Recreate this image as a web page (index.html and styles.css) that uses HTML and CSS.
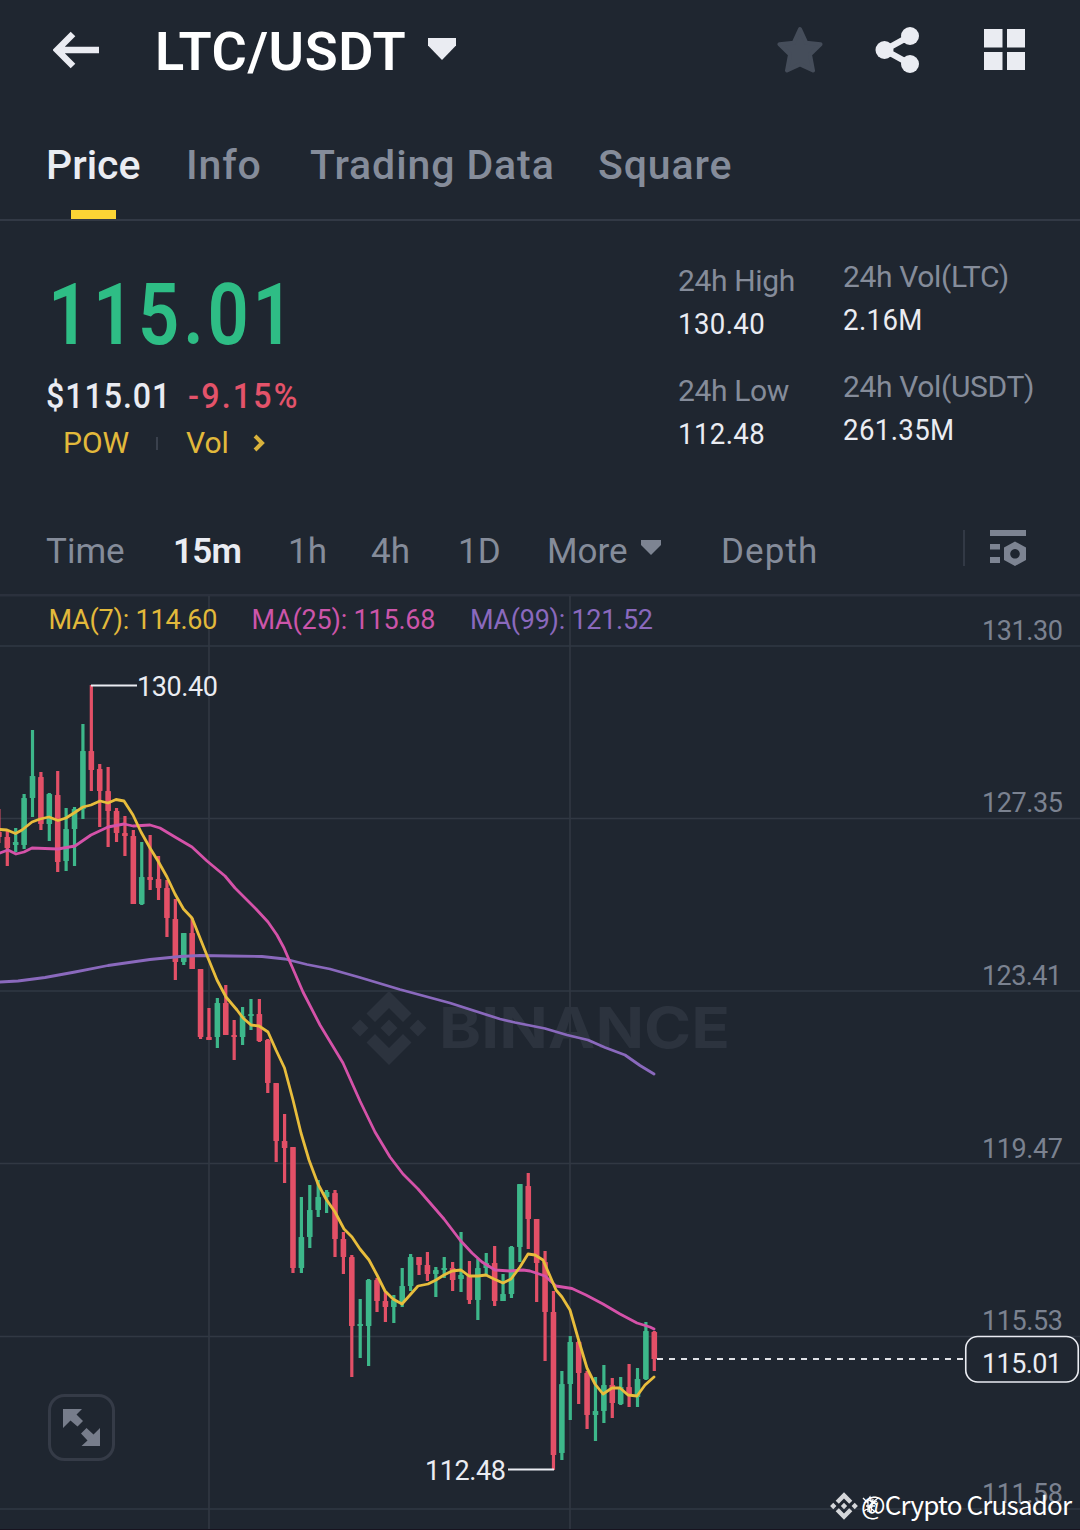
FILE: index.html
```html
<!DOCTYPE html>
<html lang="en">
<head>
    <meta charset="UTF-8">
    <meta name="viewport" content="width=device-width, initial-scale=1.0">
    <title>LTC/USDT</title>
    <link rel="stylesheet" href="styles.css">
</head>
<body>
    <header class="top-bar">
        <svg class="back-icon" viewBox="0 0 46 38" width="46" height="38">
            <path d="M20 3 L4 19 L20 35 M4 19 H46" fill="none" stroke="#eaecf2" stroke-width="6.5"/>
        </svg>
        <h1>LTC/USDT</h1>
        <svg class="pair-caret" viewBox="0 0 28 22" width="28" height="22">
            <path d="M0 0 H28 V7.500 L14 22 L0 7.500 Z" fill="#eaecf2"/>
        </svg>
        <div class="top-actions">
            <svg viewBox="0 0 46 48" width="46" height="48">
                <path d="M23 3 L29.300 16.800 L43.500 18.200 L33 28.500 L36 44.500 L23 38.500 L10 44.500 L13 28.500 L2.500 18.200 L16.700 16.800 Z" fill="#454d5a" stroke="#454d5a" stroke-width="4" stroke-linejoin="round"/>
            </svg>
            <svg viewBox="0 0 44 48" width="44" height="48">
                <path d="M35 10 L9.500 24 L35 38" fill="none" stroke="#eaecf2" stroke-width="6"/>
                <circle cx="35" cy="10" r="9" fill="#eaecf2"/>
                <circle cx="9.500" cy="24" r="9" fill="#eaecf2"/>
                <circle cx="35" cy="38" r="9" fill="#eaecf2"/>
            </svg>
            <svg viewBox="0 0 41 41" width="41" height="41">
                <path d="M0 0h18.500v18.500H0z M23 0H41v18.500H23z M0 23h18.500V41H0z M23 23H41V41H23z" fill="#eaecf2"/>
            </svg>
        </div>
    </header>

    <nav class="tabs">
        <a class="tab active">Price</a>
        <a class="tab">Info</a>
        <a class="tab">Trading Data</a>
        <a class="tab">Square</a>
    </nav>

    <section class="summary">
        <div class="quote">
            <div class="last-price">115.01</div>
            <div class="fiat-row">
                <span class="fiat">$115.01</span>
                <span class="change">-9.15%</span>
            </div>
            <div class="tags">
                <span class="tag-pow">POW</span>
                <i class="tag-divider"></i>
                <span class="tag-vol">Vol</span>
                <svg viewBox="0 0 12 18" width="12" height="18">
                    <path d="M2 2 L9 9 L2 16" fill="none" stroke="#d9b23c" stroke-width="4"/>
                </svg>
            </div>
        </div>
        <div class="stats">
            <div class="label">24h High</div>
            <div class="value">130.40</div>
            <div class="label second">24h Low</div>
            <div class="value">112.48</div>
        </div>
        <div class="stats volume">
            <div class="label">24h Vol(LTC)</div>
            <div class="value">2.16M</div>
            <div class="label second">24h Vol(USDT)</div>
            <div class="value">261.35M</div>
        </div>
    </section>

    <nav class="intervals">
        <span>Time</span>
        <span class="active">15m</span>
        <span>1h</span>
        <span>4h</span>
        <span>1D</span>
        <span class="more">More
            <svg viewBox="0 0 20 15" width="20" height="15">
                <path d="M0 0 H20 V5 L10 15 L0 5 Z" fill="#7d8492"/>
            </svg>
        </span>
        <span class="depth">Depth</span>
        <i class="interval-divider"></i>
        <svg class="indicator-icon" viewBox="0 0 36 38" width="36" height="38">
            <path d="M0 1h36v6H0z M0 15h10v5.500H0z M0 28h10v6H0z" fill="#7d8492"/>
            <path fill-rule="evenodd" d="M25 12.500 L36 18.500 V31 L25 37 L14 31 V18.500 Z M25 20 a4.800 4.800 0 1 0 0.010 0 Z" fill="#7d8492"/>
        </svg>
    </nav>

    <svg class="chart" viewBox="0 594 1080 936" width="1080" height="936">
        <g class="grid">
            <path class="chart-top" d="M0 595H1080"/>
            <path d="M0 646H1080 M0 818.500H1080 M0 991H1080 M0 1163.500H1080 M0 1336.500H1080 M0 1509H1080"/>
            <path d="M209 596V1530 M570 596V1530"/>
        </g>

        <g class="brand">
            <g id="brand-mark" transform="translate(389 1028)">
                <path d="M0 -37 L22.500 -14.500 L14 -6 L0 -20 L-14 -6 L-22.500 -14.500 Z"/>
                <path d="M0 37 L22.500 14.500 L14 6 L0 20 L-14 6 L-22.500 14.500 Z"/>
                <path d="M0 -8.500 L8.500 0 L0 8.500 L-8.500 0 Z M-29 -8.500 L-20.500 0 L-29 8.500 L-37.500 0 Z M29 -8.500 L37.500 0 L29 8.500 L20.500 0 Z"/>
            </g>
            <text x="439" y="1048" textLength="291" lengthAdjust="spacingAndGlyphs">BINANCE</text>
        </g>

        <g id="candles"></g>

        <polyline class="ma ma99" points="0,982 18,981 45,977.500 75,972 108,965.500 150,959.500 180,956.500 200,955.500 230,956 262,956.500 285,959 307,964.500 330,969 360,977.500 400,989.500 450,1003 500,1019 515,1022.500 545,1028.500 567,1035 588,1040 605,1047.500 625,1055 640,1065.500 654,1074"/>
        <polyline class="ma ma25" points="0,853 8,850 16,854 24,852 32,848 58,849 75,846 91,835 108,827 124,824 133,826 150,825 160,828 175,837 192,847 207,861 225,876 235,888 245,898 256,909 268,922 277,935 284,948 290,962 303,992 320,1025 343,1063 360,1101 375,1132 390,1157 403,1174 418,1189 431,1204 444,1219 460,1240 472,1253 482,1262 495,1270 510,1271 523,1270 530,1271 545,1276 556,1286 572,1288.500 586,1295 603,1304 620,1314 637,1323 650,1327 654,1329"/>
        <polyline class="ma ma7" points="0,829.500 7,830 15.500,833.500 22,830 32,822 40,819 49,817 58,820.500 66,818 74,813 83,807 91,805 100,801 108,803 116,799.500 124,801 133,815 141,832 150,848 158,861 167,877 175,894 183.500,909 192,918 200,938 208,958 217,980 226,997 237,1010 243,1018 251,1025 259,1026 268,1032 276,1050 284.500,1068 293,1100 301,1133 309,1160 318,1184 326,1199 335,1212 344,1229 352,1237 360,1249 369,1260 377,1275 385,1291 393,1299 402,1304 410,1295 418,1286 428,1284 436,1280 444,1275 452,1271 461,1270 469,1276 478,1276 486,1275 494,1279 503,1283 511,1279 520,1267 528,1254 535,1255 543,1260 550,1276 556,1290 562,1297 570,1310 578,1338 587,1368 595,1384 603,1394 612,1388 620,1388 628,1395 637,1396 645,1385 654,1377"/>

        <g class="legend">
            <text class="ma7-text" x="48.500" y="629" textLength="169">MA(7): 114.60</text>
            <text class="ma25-text" x="251.500" y="629" textLength="184">MA(25): 115.68</text>
            <text class="ma99-text" x="470" y="629" textLength="183">MA(99): 121.52</text>
        </g>

        <g class="axis">
            <text x="982" y="640" textLength="81">131.30</text>
            <text x="982" y="812" textLength="81">127.35</text>
            <text x="982" y="985" textLength="80">123.41</text>
            <text x="982" y="1158" textLength="81">119.47</text>
            <text x="982" y="1330" textLength="81">115.53</text>
            <text x="982" y="1503" textLength="81">111.58</text>
        </g>

        <g class="extremes">
            <path d="M91 685.500H137 M508 1469.500H554"/>
            <text x="137" y="696" textLength="81">130.40</text>
            <text x="425" y="1480" textLength="81">112.48</text>
        </g>

        <path class="last-line" d="M657 1359H965"/>
        <rect class="last-box" x="965.750" y="1336.500" width="112.500" height="45.500" rx="12"/>
        <text class="last-text" x="982" y="1373" textLength="80">115.01</text>

        <g class="expand">
            <rect x="49.500" y="1395.500" width="64" height="64" rx="15"/>
            <path d="M63 1409 H82 L76.500 1414.500 L83 1421 L77.500 1426.500 L70.500 1420.500 L63 1428 Z"/>
            <path d="M100 1446 H81.500 L87.500 1440.500 L81 1433.500 L86.500 1428 L93.500 1434.500 L100 1428 Z"/>
        </g>

        <g class="author">
            <use href="#brand-mark" transform="translate(844 1506) scale(.37) translate(-389 -1028)"/>
            <path class="scribble" d="M863 1498l4 4 3-5 2 6 6-5 M864 1503l5-3 4 3 4-2 M866 1506h9 M868 1500v12 M873 1499l-2 13 M864 1511l6-4 5 5"/>
            <text x="861" y="1515" textLength="211">@Crypto Crusador</text>
        </g>
        <path d="M0 1529.500H1080" stroke="#17131f"/>
    </svg>

    <script>
        // [direction, high, body top, body bottom, low]
        const candles = [
            ['r', 809, 832, 837, 843], ['r', 830, 837, 848, 866], ['g', 828, 842, 845, 852],
            ['g', 794, 798, 845, 849], ['g', 730, 776, 798, 817], ['r', 772, 777, 824, 830],
            ['g', 793, 794, 824, 841], ['r', 771, 795, 862, 872], ['g', 808, 829, 861, 871],
            ['g', 807, 809, 829, 866], ['g', 724, 751, 809, 819], ['r', 685, 751, 770, 791],
            ['r', 764, 769, 791, 827], ['r', 767, 791, 811, 847], ['r', 808, 811, 833, 842],
            ['r', 816, 833, 836, 856], ['r', 830, 836, 904, 904], ['g', 842, 877, 904, 905],
            ['r', 835, 877, 880, 890], ['r', 856, 879, 888, 900], ['r', 880, 888, 918, 937],
            ['r', 899, 919, 962, 980], ['g', 933, 933, 962, 965], ['r', 918, 933, 969, 969],
            ['r', 969, 969, 1037, 1039], ['r', 1008, 1037, 1040, 1040], ['g', 998, 1003, 1037, 1048],
            ['r', 985, 1003, 1035, 1035], ['r', 1020, 1035, 1037, 1060], ['g', 1007, 1016, 1037, 1045],
            ['g', 999, 1014, 1016, 1030], ['r', 999, 1014, 1041, 1042], ['r', 1039, 1040, 1083, 1093],
            ['r', 1083, 1083, 1141, 1162], ['r', 1114, 1141, 1148, 1183], ['r', 1147, 1147, 1268, 1273],
            ['g', 1197, 1237, 1268, 1273], ['g', 1185, 1210, 1237, 1248], ['g', 1180, 1197, 1210, 1217],
            ['g', 1190, 1192, 1197, 1213], ['r', 1190, 1193, 1239, 1257], ['r', 1232, 1239, 1257, 1274],
            ['r', 1255, 1257, 1326, 1377], ['g', 1299, 1324, 1326, 1358], ['g', 1279, 1280, 1326, 1366],
            ['r', 1278, 1280, 1301, 1312], ['r', 1291, 1301, 1307, 1322], ['g', 1295, 1300, 1307, 1323],
            ['g', 1268, 1286, 1303, 1307], ['g', 1254, 1257, 1286, 1291], ['r', 1257, 1257, 1265, 1275],
            ['r', 1252, 1265, 1274, 1281], ['g', 1267, 1270, 1274, 1297], ['g', 1257, 1268, 1270, 1278],
            ['r', 1262, 1268, 1280, 1291], ['g', 1232, 1275, 1279, 1292], ['r', 1261, 1275, 1300, 1304],
            ['g', 1259, 1268, 1300, 1320], ['g', 1253, 1263, 1268, 1275], ['r', 1246, 1263, 1301, 1306],
            ['g', 1274, 1294, 1301, 1301], ['g', 1246, 1247, 1294, 1298], ['g', 1184, 1184, 1247, 1262],
            ['r', 1173, 1186, 1219, 1249], ['r', 1219, 1219, 1263, 1302], ['r', 1251, 1262, 1312, 1361],
            ['r', 1291, 1312, 1455, 1470], ['g', 1371, 1384, 1453, 1460], ['g', 1336, 1342, 1384, 1420],
            ['r', 1341, 1342, 1373, 1404], ['r', 1371, 1373, 1415, 1429], ['g', 1377, 1411, 1415, 1441],
            ['g', 1365, 1385, 1411, 1423], ['r', 1378, 1385, 1403, 1418], ['g', 1377, 1387, 1404, 1405],
            ['r', 1364, 1387, 1395, 1407], ['g', 1368, 1379, 1397, 1407], ['g', 1322, 1331, 1379, 1380],
            ['r', 1331, 1332, 1359, 1371]
        ];
        const step = 8.4026;

        document.getElementById('candles').innerHTML = candles.map(([dir, high, top, bottom, low], i) => {
            const x = 7.3 + (i - 1) * step;
            return `<g class="${dir === 'g' ? 'up' : 'down'}">
                <rect x="${x - 1.6}" y="${high}" width="3.2" height="${low - high}"/>
                <rect x="${x - 2.8}" y="${top}" width="5.6" height="${bottom - top}" rx="0.6"/>
            </g>`;
        }).join('');
    </script>
</body>
</html>
```
FILE: styles.css
```css
* {
    margin: 0;
    padding: 0;
    box-sizing: border-box;
}

:root {
    --bg: #1f2630;
    --text: #eaecf2;
    --text-gray: #858c9a;
    --line: #323945;
    --green: #2ebd85;
    --red: #e4536a;
    --yellow: #e2b93b;
    --pink: #d552a9;
    --purple: #8a69bd;
}

body {
    width: 1080px;
    height: 1530px;
    overflow: hidden;
    background: var(--bg);
    color: var(--text);
    font-family: Roboto, "Liberation Sans", sans-serif;
}

svg {
    display: block;
    flex: none;
}

.top-bar {
    display: flex;
    align-items: center;
    height: 100px;
    padding: 0 55px 0 53px;
}

h1 {
    width: 272px;
    margin-left: 56px;
    margin-top: 2px;
    color: #fff;
    font-size: 54px;
    font-weight: 600;
    letter-spacing: 0.6px;
    white-space: nowrap;
}

.pair-caret {
    margin-left: 1px;
    margin-top: -2px;
}

.top-actions {
    display: flex;
    align-items: center;
    margin-left: auto;
    margin-top: -1px;
}

.top-actions svg:nth-child(2) {
    margin: 0 65px 0 52px;
}

.tabs {
    display: grid;
    grid-template-columns: 140px 124px 288px auto;
    height: 121px;
    padding: 40px 0 0 46px;
    border-bottom: 2px solid var(--line);
    color: var(--text-gray);
    font-size: 41px;
    font-weight: 500;
    line-height: 50px;
    letter-spacing: 0.9px;
    white-space: nowrap;
}

.tab.active {
    position: relative;
    width: 94px;
    color: var(--text);
    letter-spacing: 0;
}

.tab.active::after {
    content: "";
    position: absolute;
    left: 25px;
    bottom: 0;
    width: 45px;
    height: 9px;
    background: #fcd535;
}

.summary {
    display: grid;
    grid-template-columns: 632px 165px auto;
    height: 287px;
    padding-left: 46px;
}

/* narrow figures */
.last-price,
.fiat,
.change,
.value {
    transform-origin: left center;
}

.quote {
    padding-top: 58px;
}

.last-price {
    width: 300px;
    margin-left: 2px;
    color: var(--green);
    font-size: 86px;
    font-weight: 600;
    line-height: 72px;
    letter-spacing: 4.5px;
    transform: scaleX(0.84);
}

.fiat-row {
    display: flex;
    margin-top: 25px;
    font-size: 35px;
    font-weight: 500;
    line-height: 42px;
}

.fiat {
    width: 142px;
    letter-spacing: 1px;
    transform: scaleX(0.92);
}

.change {
    color: var(--red);
    letter-spacing: 2.4px;
    transform: scaleX(0.92);
}

.tags {
    display: flex;
    align-items: center;
    margin-top: 7px;
    padding-left: 17px;
    color: var(--yellow);
    font-size: 30px;
    line-height: 36px;
}

.tag-pow {
    width: 93px;
}

.tag-divider {
    width: 2px;
    height: 13px;
    background: #3a414d;
}

.tag-vol {
    width: 67px;
    margin-left: 28px;
}

.stats {
    padding-top: 37.5px;
    font-size: 30px;
    line-height: 43px;
    white-space: nowrap;
}

.stats.volume {
    padding-top: 34px;
}

.label {
    color: var(--text-gray);
    letter-spacing: -0.35px;
}

.label.second {
    margin-top: 24px;
}

.value {
    letter-spacing: 0.4px;
    transform: scaleX(0.92);
}

.intervals {
    display: grid;
    grid-template-columns: 127px 115px 83px 87px 89px 174px 242px 27px auto;
    align-items: center;
    height: 86px;
    padding-left: 46px;
    color: var(--text-gray);
    font-size: 35px;
}

.intervals .active {
    color: var(--text);
    font-weight: 600;
    letter-spacing: -0.8px;
}

.more {
    display: flex;
    align-items: center;
    gap: 13px;
}

.more svg {
    margin-top: -8px;
}

.depth {
    letter-spacing: 1.1px;
}

.interval-divider {
    width: 2px;
    height: 36px;
    margin-top: -6px;
    background: var(--line);
}

.indicator-icon {
    margin-top: -6px;
}

.chart {
    font-size: 27px;
}

.grid {
    fill: none;
    stroke: #313843;
    stroke-width: 1.6;
}

.grid .chart-top {
    stroke: #2b313d;
    stroke-width: 3;
}

.brand {
    fill: #2c333e;
}

.brand text {
    font: 700 56px Inter, sans-serif;
}

.up {
    fill: #3db78a;
}

.down {
    fill: #e35067;
}

.ma {
    fill: none;
    stroke-width: 2.8;
    stroke-linejoin: round;
    stroke-linecap: round;
}

.ma7 {
    stroke: #e8bd3c;
}

.ma25 {
    stroke: var(--pink);
}

.ma99 {
    stroke: var(--purple);
}

.ma7-text {
    fill: var(--yellow);
}

.ma25-text {
    fill: #cc55aa;
}

.ma99-text {
    fill: var(--purple);
}

.axis {
    fill: #7b8290;
}

.extremes {
    fill: var(--text);
}

.extremes path {
    stroke: var(--text);
    stroke-width: 1.8;
}

.last-line {
    stroke: #dfe1e6;
    stroke-width: 1.8;
    stroke-dasharray: 6 6;
}

.last-box {
    fill: var(--bg);
    stroke: var(--text);
    stroke-width: 1.6;
}

.last-text {
    fill: var(--text);
}

.expand rect {
    fill: none;
    stroke: #353b47;
    stroke-width: 3;
}

.expand path {
    fill: #777d8b;
}

.author {
    fill: #fff;
}

.author use {
    fill: #d5d7da;
}

.author text {
    font: 400 26px "Noto Sans CJK SC", "Noto Sans", sans-serif;
}

.scribble {
    fill: none;
    stroke: #fff;
    stroke-width: 1.3;
}
```
